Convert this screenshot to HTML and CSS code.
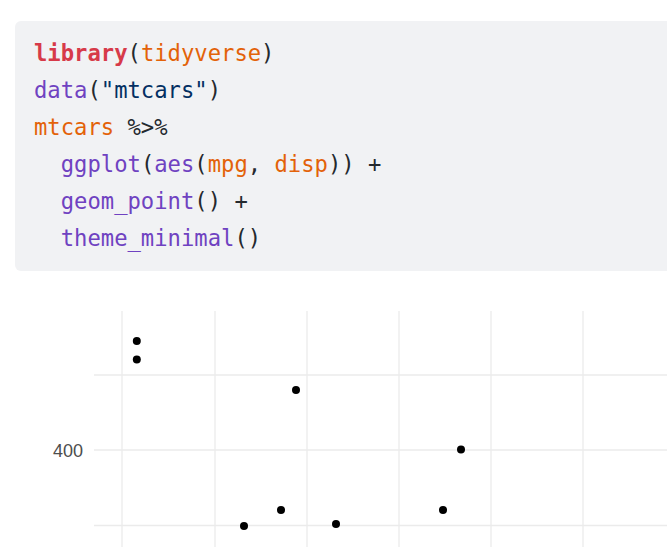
FILE: index.html
```html
<!DOCTYPE html>
<html>
<head>
<meta charset="utf-8">
<link rel="stylesheet" href="styles.css">
</head>
<body>
<pre class="code"><code><span class="kw">library</span><span class="p">(</span><span class="or">tidyverse</span><span class="p">)</span>
<span class="fn">data</span><span class="p">(</span><span class="st">"mtcars"</span><span class="p">)</span>
<span class="or">mtcars</span> <span class="p">%&gt;%</span>
  <span class="fn">ggplot</span><span class="p">(</span><span class="fn">aes</span><span class="p">(</span><span class="or">mpg</span><span class="p">,</span> <span class="or">disp</span><span class="p">))</span> <span class="p">+</span>
  <span class="fn">geom_point</span><span class="p">()</span> <span class="p">+</span>
  <span class="fn">theme_minimal</span><span class="p">()</span></code></pre>
<figure class="plot">
<svg class="plot-svg" width="667" height="276" viewBox="0 0 667 276">
  <g stroke="#ebebeb" stroke-width="1.3">
    <line x1="122" y1="40" x2="122" y2="276"/>
    <line x1="215" y1="40" x2="215" y2="276"/>
    <line x1="307" y1="40" x2="307" y2="276"/>
    <line x1="399" y1="40" x2="399" y2="276"/>
    <line x1="491" y1="40" x2="491" y2="276"/>
    <line x1="583" y1="40" x2="583" y2="276"/>
    <line x1="94" y1="104" x2="667" y2="104"/>
    <line x1="94" y1="179" x2="667" y2="179" stroke-width="1.6"/>
    <line x1="94" y1="254.5" x2="667" y2="254.5"/>
  </g>
  <text class="tick" x="83" y="185.5" text-anchor="end">400</text>
  <g fill="#000">
    <circle cx="136.8" cy="70" r="4"/>
    <circle cx="136.8" cy="88.5" r="4"/>
    <circle cx="296" cy="119" r="4"/>
    <circle cx="461" cy="178.5" r="4"/>
    <circle cx="244" cy="255" r="4"/>
    <circle cx="281" cy="239" r="4"/>
    <circle cx="336" cy="253" r="4"/>
    <circle cx="443" cy="239" r="4"/>
  </g>
</svg>
</figure>
</body>
</html>
```
FILE: styles.css
```css
html, body {
  margin: 0;
  padding: 0;
  background: #ffffff;
}
body {
  overflow: hidden;
}
.code {
  margin: 21px -8px 0 15px;
  padding: 14px 19px;
  background: #f1f2f4;
  border-radius: 6px;
  font-family: "DejaVu Sans Mono", "Liberation Mono", monospace;
  font-size: 22.2px;
  line-height: 37px;
  color: #24292e;
  white-space: pre;
}
.code code {
  font-family: inherit;
}
.kw { color: #d73a49; font-weight: bold; }
.or { color: #e36209; }
.fn { color: #6f42c1; }
.st { color: #032f62; }
.p { color: #24292e; }
.plot {
  margin: 0;
  display: block;
}
.plot-svg {
  display: block;
}
.tick {
  font-family: "Liberation Sans", Arial, sans-serif;
  font-size: 18px;
  fill: #4d4d4d;
}
```
